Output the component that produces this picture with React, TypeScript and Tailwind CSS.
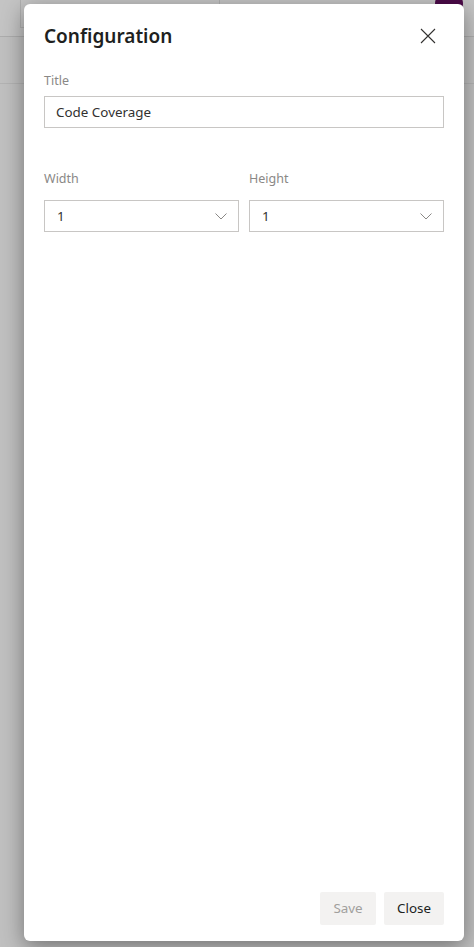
import React from "react";

const font = { fontFamily: '"Segoe UI", "Noto Sans", "Open Sans", sans-serif' };

function Chevron() {
  return (
    <svg width="12" height="7" viewBox="0 0 12 7" fill="none" className="text-[#8a8886]">
      <path d="M0.5 0.5 L6 6 L11.5 0.5" stroke="currentColor" strokeWidth="1" />
    </svg>
  );
}

function SelectBox({ label, value }: { label: string; value: string }) {
  return (
    <div className="flex flex-1 flex-col">
      <label className="text-[12.5px] leading-[18px] text-[#8a8886]">{label}</label>
      <div className="mt-[12px] flex h-[32px] items-center justify-between border border-[#c8c6c4] pl-[12px] pr-[11px]">
        <span className="text-[13.4px] text-[#323130]">{value}</span>
        <Chevron />
      </div>
    </div>
  );
}

export default function App() {
  return (
    <div className="relative h-[947px] w-[474px] overflow-hidden bg-[#c0c0c0]" style={font}>
      {/* page behind the overlay */}
      <div className="flex h-[37px] items-start justify-between border-b border-[#adadad] bg-[#c4c4c4] pl-[20px] pr-[11px]">
        <div className="h-[28px] w-[200px] border-x border-b border-[#b0b0b0]" />
        <div className="-mt-[10px] h-[28px] w-[28px] rounded-full bg-[#4b0a48]" />
      </div>
      <div className="mt-[46px] border-t border-[#b3b3b3]" />

      {/* dialog */}
      <div className="absolute left-[24px] top-[4px] flex h-[937px] w-[440px] flex-col rounded-[6px] bg-white px-[20px] shadow-[0_6px_22px_rgba(0,0,0,0.4)]">
        <div className="flex items-center justify-between pt-[19px]">
          <h2 className="text-[19px] font-semibold leading-[26px] text-[#201f1e]">Configuration</h2>
          <button className="mr-[4px] flex h-[24px] w-[24px] items-center justify-center text-[#323130]">
            <svg width="16" height="16" viewBox="0 0 16 16" fill="none">
              <path d="M1 1 L15 15 M15 1 L1 15" stroke="currentColor" strokeWidth="1.1" />
            </svg>
          </button>
        </div>

        <label className="mt-[23px] text-[12.5px] leading-[18px] text-[#8a8886]">Title</label>
        <div className="mt-[6px] flex h-[32px] items-center border border-[#c8c6c4] px-[11px]">
          <span className="text-[13.4px] text-[#323130]">Code Coverage</span>
        </div>

        <div className="mt-[42px] flex gap-[10px]">
          <SelectBox label="Width" value="1" />
          <SelectBox label="Height" value="1" />
        </div>

        <div className="mt-auto flex justify-end gap-[8px] pb-[16px]">
          <button className="h-[33px] w-[56px] rounded-[2px] bg-[#f3f2f1] text-[13.4px] text-[#a19f9d]">Save</button>
          <button className="h-[33px] w-[60px] rounded-[2px] bg-[#f3f2f1] text-[13.4px] text-[#201f1e]">Close</button>
        </div>
      </div>
    </div>
  );
}
